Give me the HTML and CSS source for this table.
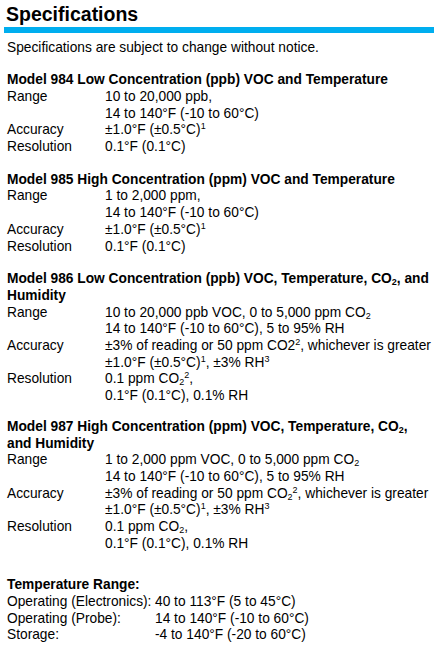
FILE: index.html
```html
<!DOCTYPE html>
<html>
<head>
<meta charset="utf-8">
<link rel="stylesheet" href="styles.css">
</head>
<body>
<div class="page">
  <h1 class="title">Specifications</h1>
  <div class="bar"></div>
  <p class="note">Specifications are subject to change without notice.</p>

  <section class="group">
    <h2 class="heading">Model 984 Low Concentration (ppb) VOC and Temperature</h2>
    <div class="specs">
      <div class="label">Range</div>
      <div class="value">10 to 20,000 ppb,<br>14 to 140°F (-10 to 60°C)</div>
      <div class="label">Accuracy</div>
      <div class="value">±1.0°F (±0.5°C)<sup>1</sup></div>
      <div class="label">Resolution</div>
      <div class="value">0.1°F (0.1°C)</div>
    </div>
  </section>

  <section class="group">
    <h2 class="heading">Model 985 High Concentration (ppm) VOC and Temperature</h2>
    <div class="specs">
      <div class="label">Range</div>
      <div class="value">1 to 2,000 ppm,<br>14 to 140°F (-10 to 60°C)</div>
      <div class="label">Accuracy</div>
      <div class="value">±1.0°F (±0.5°C)<sup>1</sup></div>
      <div class="label">Resolution</div>
      <div class="value">0.1°F (0.1°C)</div>
    </div>
  </section>

  <section class="group">
    <h2 class="heading">Model 986 Low Concentration (ppb) VOC, Temperature, CO<sub>2</sub>, and Humidity</h2>
    <div class="specs">
      <div class="label">Range</div>
      <div class="value">10 to 20,000 ppb VOC, 0 to 5,000 ppm CO<sub>2</sub><br>14 to 140°F (-10 to 60°C), 5 to 95% RH</div>
      <div class="label">Accuracy</div>
      <div class="value">±3% of reading or 50 ppm CO2<sup>2</sup>, whichever is greater<br>±1.0°F (±0.5°C)<sup>1</sup>, ±3% RH<sup>3</sup></div>
      <div class="label">Resolution</div>
      <div class="value">0.1 ppm CO<sub>2</sub><sup>2</sup>,<br>0.1°F (0.1°C), 0.1% RH</div>
    </div>
  </section>

  <section class="group group-tight">
    <h2 class="heading">Model 987 High Concentration (ppm) VOC, Temperature, CO<sub>2</sub>, and Humidity</h2>
    <div class="specs">
      <div class="label">Range</div>
      <div class="value">1 to 2,000 ppm VOC, 0 to 5,000 ppm CO<sub>2</sub><br>14 to 140°F (-10 to 60°C), 5 to 95% RH</div>
      <div class="label">Accuracy</div>
      <div class="value">±3% of reading or 50 ppm CO<sub>2</sub><sup>2</sup>, whichever is greater<br>±1.0°F (±0.5°C)<sup>1</sup>, ±3% RH<sup>3</sup></div>
      <div class="label">Resolution</div>
      <div class="value">0.1 ppm CO<sub>2</sub>,<br>0.1°F (0.1°C), 0.1% RH</div>
    </div>
  </section>

  <section class="group group-wide">
    <h2 class="heading">Temperature Range:</h2>
    <div class="specs specs-wide">
      <div class="label">Operating (Electronics):</div>
      <div class="value">40 to 113°F (5 to 45°C)</div>
      <div class="label">Operating (Probe):</div>
      <div class="value">14 to 140°F (-10 to 60°C)</div>
      <div class="label">Storage:</div>
      <div class="value">-4 to 140°F (-20 to 60°C)</div>
    </div>
  </section>
</div>
</body>
</html>
```

FILE: styles.css
```css
html, body {
  margin: 0;
  padding: 0;
  background: #ffffff;
}

.page {
  font-family: "Liberation Sans", Arial, sans-serif;
  font-size: 13.75px;
  line-height: 16.7px;
  color: #000;
  padding: 0 8px 0 4px;
  width: 430px;
}

.title {
  margin: 0;
  padding: 3px 0 0 2px;
  font-size: 19.5px;
  line-height: 22px;
  font-weight: bold;
  color: #000;
}

.bar {
  height: 6px;
  background: #00aeef;
  margin-top: 2px;
}

.note {
  margin: 6.5px 0 0 3px;
}

.group {
  margin: 16px 0 0 3px;
}

.group-tight {
  margin-top: 14px;
}

.group-wide {
  margin-top: 25px;
}

.heading {
  margin: 0;
  font-size: 13.75px;
  line-height: 16.7px;
  font-weight: bold;
}

.specs {
  display: grid;
  grid-template-columns: 98px 1fr;
}

.specs-wide {
  grid-template-columns: 148px 1fr;
  line-height: 16.4px;
}

sup, sub {
  font-size: 9px;
  line-height: 0;
  position: relative;
  vertical-align: baseline;
}

sup {
  top: -5px;
}

sub {
  top: 2px;
}
```
